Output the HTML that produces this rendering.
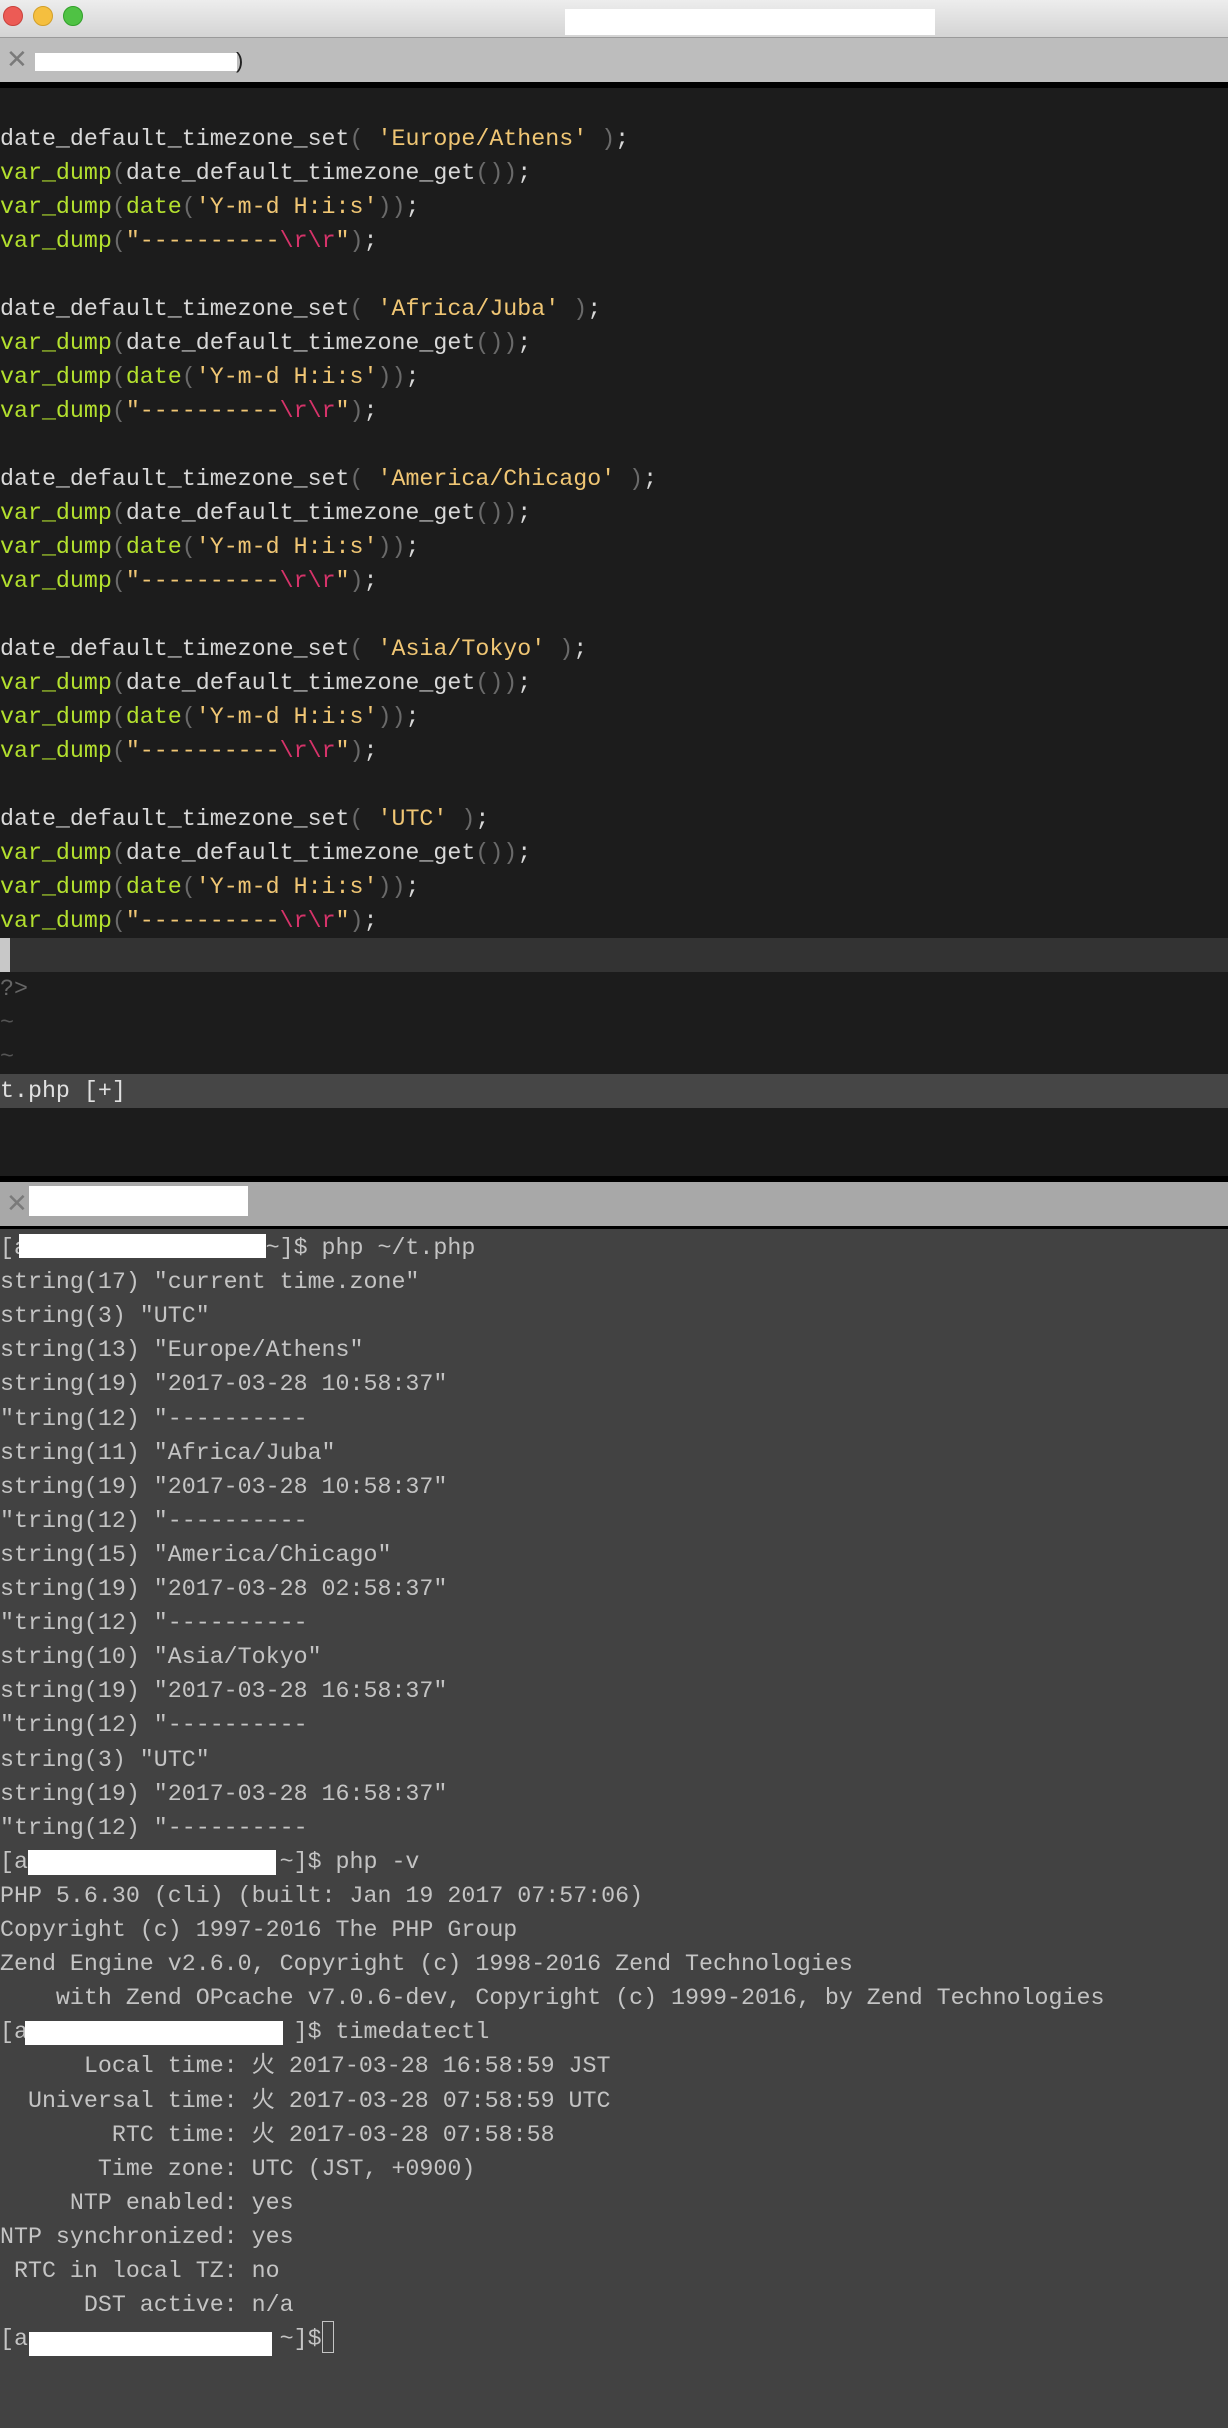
<!DOCTYPE html>
<html><head><meta charset="utf-8"><style>
*{margin:0;padding:0}
body{width:1228px;height:2428px;position:relative;background:#424242;overflow:hidden;font-family:"Liberation Mono","Noto Sans CJK JP",monospace;font-size:23.3px}
.a{position:absolute}
.title{left:0;top:0;width:1228px;height:37px;background:linear-gradient(#ededed,#d4d4d4);border-bottom:1px solid #9a9a9a}
.dot{width:18px;height:18px;border-radius:50%;top:6px}
.tab{left:0;width:1228px}
.x{color:#7a7a7a;font-family:"Liberation Sans",sans-serif;font-size:26px}
.w{background:#fff}
.ed{left:0;top:88px;width:1228px;height:1088px;background:#1c1c1c}
.ln{position:absolute;left:0;height:34px;line-height:34px;white-space:pre;color:#d8d8d8}
.g{color:#b3e02e}.y{color:#f0c674}.r{color:#d6336a}.p{color:#6a6a6a}
.t{position:absolute;left:0;height:34.1px;line-height:34.1px;white-space:pre;color:#c4c4c4}
</style></head><body>
<div class="a title"></div>
<div class="a dot" style="left:3px;background:#ec5b55;border:1px solid #c9423c"></div>
<div class="a dot" style="left:33px;background:#f5bf3f;border:1px solid #d29f2a"></div>
<div class="a dot" style="left:63px;background:#4fc244;border:1px solid #32a02b"></div>
<div class="a w" style="left:565px;top:9px;width:370px;height:26px"></div>
<div class="a tab" style="top:38px;height:44px;background:#bdbdbd"></div>
<div class="a x" style="left:6px;top:44px">✕</div>
<div class="a w" style="left:35px;top:53px;width:202px;height:18px"></div>
<div class="a" style="left:236px;top:48px;color:#222;font-family:'Liberation Sans',sans-serif;font-size:22px">)</div>
<div class="a" style="left:0;top:82px;width:1228px;height:6px;background:#000"></div>
<div class="a ed"></div>
<div id="code"></div>
<div class="a" style="left:0;top:938px;width:1228px;height:34px;background:#333"></div>
<div class="a" style="left:0;top:938px;width:10px;height:34px;background:#c8c8c8"></div>
<div class="ln" style="top:972px;color:#666">?&gt;</div>
<div class="ln" style="top:1006px;color:#555">~</div>
<div class="ln" style="top:1040px;color:#555">~</div>
<div class="a" style="left:0;top:1074px;width:1228px;height:34px;background:#464646"></div>
<div class="ln" style="top:1074px;color:#e0e0e0">t.php [+]</div>
<div class="a" style="left:0;top:1176px;width:1228px;height:6px;background:#000"></div>
<div class="a tab" style="top:1182px;height:44px;background:#a8a8a8"></div>
<div class="a x" style="left:6px;top:1188px">✕</div>
<div class="a w" style="left:29px;top:1186px;width:219px;height:30px"></div>
<div class="a" style="left:0;top:1226px;width:1228px;height:3px;background:#000"></div>
<div id="term"></div>
<script>
var L=[
'date_default_timezone_set<span class="p">(</span> <span class="y">\'Europe/Athens\'</span> <span class="p">)</span>;',
'<span class="g">var_dump</span><span class="p">(</span>date_default_timezone_get<span class="p">())</span>;',
'<span class="g">var_dump</span><span class="p">(</span><span class="g">date</span><span class="p">(</span><span class="y">\'Y-m-d H:i:s\'</span><span class="p">))</span>;',
'<span class="g">var_dump</span><span class="p">(</span><span class="y">"----------</span><span class="r">\\r\\r</span><span class="y">"</span><span class="p">)</span>;',''];
var Z=['Europe/Athens','Africa/Juba','America/Chicago','Asia/Tokyo','UTC'];
var h='';
for(var i=0;i<5;i++){for(var j=0;j<4;j++){var s=L[j];if(j==0)s=s.replace('Europe/Athens',Z[i]);h+='<div class="ln" style="top:'+(122+(i*5+j)*34)+'px">'+s+'</div>';}}
document.getElementById('code').innerHTML=h;
var T=['[a                 ~]$ php ~/t.php','string(17) "current time.zone"','string(3) "UTC"','string(13) "Europe/Athens"','string(19) "2017-03-28 10:58:37"','"tring(12) "----------','string(11) "Africa/Juba"','string(19) "2017-03-28 10:58:37"','"tring(12) "----------','string(15) "America/Chicago"','string(19) "2017-03-28 02:58:37"','"tring(12) "----------','string(10) "Asia/Tokyo"','string(19) "2017-03-28 16:58:37"','"tring(12) "----------','string(3) "UTC"','string(19) "2017-03-28 16:58:37"','"tring(12) "----------',
'[a                  ~]$ php -v','PHP 5.6.30 (cli) (built: Jan 19 2017 07:57:06)','Copyright (c) 1997-2016 The PHP Group','Zend Engine v2.6.0, Copyright (c) 1998-2016 Zend Technologies','    with Zend OPcache v7.0.6-dev, Copyright (c) 1999-2016, by Zend Technologies',
'[a                   ]$ timedatectl','      Local time: 火 2017-03-28 16:58:59 JST','  Universal time: 火 2017-03-28 07:58:59 UTC','        RTC time: 火 2017-03-28 07:58:58','       Time zone: UTC (JST, +0900)','     NTP enabled: yes','NTP synchronized: yes',' RTC in local TZ: no','      DST active: n/a','[a                  ~]$ '];
h='';
for(var k=0;k<T.length;k++){h+='<div class="t" style="top:'+(1231+k*34.1)+'px">'+T[k]+'</div>';}
h+='<div class="a w" style="left:19px;top:1234px;width:247px;height:24px"></div>';
h+='<div class="a w" style="left:28px;top:1850px;width:248px;height:25px"></div>';
h+='<div class="a w" style="left:25px;top:2021px;width:258px;height:24px"></div>';
h+='<div class="a w" style="left:29px;top:2332px;width:243px;height:24px"></div>';
h+='<div class="a" style="left:322px;top:2321px;width:10px;height:30px;border:1px solid #c4c4c4"></div>';
document.getElementById('term').innerHTML=h;
</script>
</body></html>
